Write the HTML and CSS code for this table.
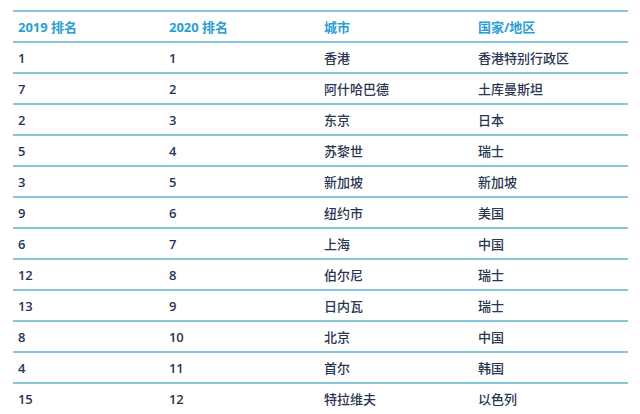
FILE: index.html
```html
<!DOCTYPE html>
<html lang="zh">
<head>
<meta charset="utf-8">
<link rel="stylesheet" href="styles.css">
</head>
<body>
<div class="table">
  <div class="row head"><div>2019 排名</div><div>2020 排名</div><div>城市</div><div>国家/地区</div></div>
  <div class="row"><div class="n">1</div><div class="n">1</div><div>香港</div><div>香港特别行政区</div></div>
  <div class="row"><div class="n">7</div><div class="n">2</div><div>阿什哈巴德</div><div>土库曼斯坦</div></div>
  <div class="row"><div class="n">2</div><div class="n">3</div><div>东京</div><div>日本</div></div>
  <div class="row"><div class="n">5</div><div class="n">4</div><div>苏黎世</div><div>瑞士</div></div>
  <div class="row"><div class="n">3</div><div class="n">5</div><div>新加坡</div><div>新加坡</div></div>
  <div class="row"><div class="n">9</div><div class="n">6</div><div>纽约市</div><div>美国</div></div>
  <div class="row"><div class="n">6</div><div class="n">7</div><div>上海</div><div>中国</div></div>
  <div class="row"><div class="n">12</div><div class="n">8</div><div>伯尔尼</div><div>瑞士</div></div>
  <div class="row"><div class="n">13</div><div class="n">9</div><div>日内瓦</div><div>瑞士</div></div>
  <div class="row"><div class="n">8</div><div class="n">10</div><div>北京</div><div>中国</div></div>
  <div class="row"><div class="n">4</div><div class="n">11</div><div>首尔</div><div>韩国</div></div>
  <div class="row last"><div class="n">15</div><div class="n">12</div><div>特拉维夫</div><div>以色列</div></div>
</div>
</body>
</html>
```
FILE: styles.css
```css
html, body {
  margin: 0;
  padding: 0;
  background: #ffffff;
}
body {
  font-family: "Open Sans", "Noto Sans CJK SC", sans-serif;
  font-size: 13px;
  font-weight: 500;
  color: #293650;
  overflow: hidden;
}
.table {
  margin: 10px 12px 0 13px;
  border-top: 2px solid #86c6d8;
}
.row {
  display: grid;
  grid-template-columns: 151px 155px 154px 1fr;
  height: 29px;
  border-bottom: 2px solid #86c6d8;
  align-items: center;
}
.row > div {
  padding-left: 5px;
  line-height: 16px;
}
.row > .n {
  font-weight: 600;
  letter-spacing: -0.3px;
}
.row.head {
  color: #2b9ed4;
  font-weight: 700;
}
.row.last {
  border-bottom: none;
}
```
